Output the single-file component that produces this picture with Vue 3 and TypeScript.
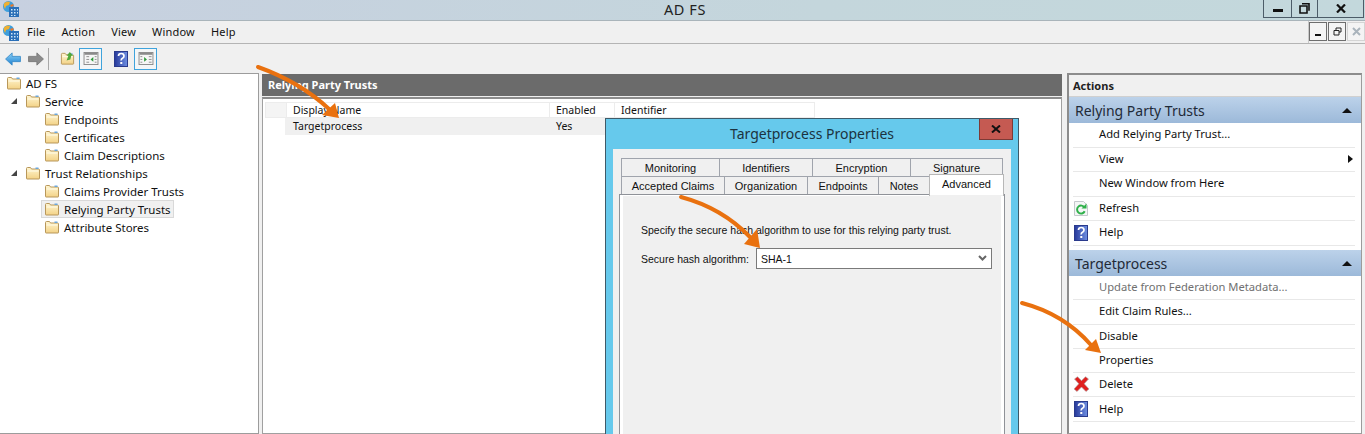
<script setup lang="ts">
const menus = ['File', 'Action', 'View', 'Window', 'Help']
const tree = [
  { label: 'AD FS', level: 0, open: false, sel: false },
  { label: 'Service', level: 1, open: true, sel: false },
  { label: 'Endpoints', level: 2, open: false, sel: false },
  { label: 'Certificates', level: 2, open: false, sel: false },
  { label: 'Claim Descriptions', level: 2, open: false, sel: false },
  { label: 'Trust Relationships', level: 1, open: true, sel: false },
  { label: 'Claims Provider Trusts', level: 2, open: false, sel: false },
  { label: 'Relying Party Trusts', level: 2, open: false, sel: true },
  { label: 'Attribute Stores', level: 2, open: false, sel: false },
]
const tabsTop = [
  { label: 'Monitoring', w: 98 },
  { label: 'Identifiers', w: 93 },
  { label: 'Encryption', w: 98 },
  { label: 'Signature', w: 93 },
]
const tabsBottom = [
  { label: 'Accepted Claims', w: 103 },
  { label: 'Organization', w: 83 },
  { label: 'Endpoints', w: 71 },
  { label: 'Notes', w: 51 },
]
const group1 = [
  { label: 'Add Relying Party Trust...', icon: '' },
  { label: 'View', icon: '', more: true },
  { label: 'New Window from Here', icon: '' },
  { label: 'Refresh', icon: 'refresh' },
  { label: 'Help', icon: 'help' },
]
const group2 = [
  { label: 'Update from Federation Metadata...', icon: '', off: true },
  { label: 'Edit Claim Rules...', icon: '' },
  { label: 'Disable', icon: '' },
  { label: 'Properties', icon: '' },
  { label: 'Delete', icon: 'delete' },
  { label: 'Help', icon: 'help' },
]
</script>

<template>
  <div class="app">
    <svg class="defs" width="0" height="0">
      <defs>
        <linearGradient id="fold" x1="0" y1="0" x2="0" y2="1">
          <stop offset="0" stop-color="#fff6d2" />
          <stop offset="1" stop-color="#f3d286" />
        </linearGradient>
        <linearGradient id="bk" x1="0" y1="0" x2="1" y2="0">
          <stop offset="0" stop-color="#26389a" />
          <stop offset="1" stop-color="#6f90e2" />
        </linearGradient>
        <linearGradient id="ar" x1="0" y1="0" x2="0" y2="1">
          <stop offset="0" stop-color="#8fd3f7" />
          <stop offset="1" stop-color="#1c7fd0" />
        </linearGradient>
        <symbol id="folder" viewBox="0 0 16 16">
          <path d="M1.500 13.500V3.500q0-1 1-1h3l1 1.500h7q1 0 1 1v8.500q0 .5-.5 .5H2q-.5 0-.5-.5z" fill="url(#fold)" stroke="#b8975a" />
          <path d="M10.500 2.500h3v1.500h-3z" fill="#6aa6dc" />
          <path d="M2.500 6h11" stroke="#fffbe8" />
        </symbol>
        <symbol id="mmc" viewBox="0 0 18 18">
          <circle cx="6.500" cy="6.500" r="5.500" fill="#3f9fdc" />
          <path d="M2 3.500q3-3 6-1.500l-1 3-3 1-1 3q-2-3-1-5.500z" fill="#f0b030" />
          <path d="M8 5l3-1 1 2-3 1z" fill="#e87a30" />
          <rect x="7" y="7" width="10" height="10" fill="#2a6fb8" />
          <path d="M9 9h1.500v1.500H9zM12 9h1.500v1.500H12zM15 9h1v1.500h-1zM9 12h1.500v1.500H9zM12 12h1.500v1.500H12zM15 12h1v1.500h-1zM9 15h1.500v1H9zM12 15h1.500v1H12z" fill="#cfe6f7" />
        </symbol>
        <symbol id="help" viewBox="0 0 14 16">
          <rect x="0.500" y="0.500" width="13" height="15" fill="url(#bk)" stroke="#2a3a8c" />
          <path d="M4.500 5q0-2.500 2.700-2.500T10 5q0 1.500-1.500 2.300T7.300 9.500" fill="none" stroke="#fff" stroke-width="1.700" />
          <rect x="6.300" y="11" width="2" height="2" fill="#fff" />
        </symbol>
      </defs>
    </svg>

    <header class="title">
      <svg class="ico18 t-ico"><use href="#mmc" /></svg>
      <span class="title-text">AD FS</span>
      <div class="win-btns">
        <div class="wb wb-min"><i></i></div>
        <div class="wb wb-max"><svg width="11" height="11" viewBox="0 0 11 11"><path d="M3 .750h7v7M1 3h7v7H1z" fill="none" stroke="#111" stroke-width="1.600" /></svg></div>
        <div class="wb wb-close">
          <svg width="10" height="9" viewBox="0 0 10 9"><path d="M1 .5l8 8M9 .5l-8 8" stroke="#111" stroke-width="2.200" /></svg>
        </div>
      </div>
    </header>

    <nav class="menubar">
      <svg class="ico18 m-ico"><use href="#mmc" /></svg>
      <span v-for="m in menus" :key="m" class="menu">{{ m }}</span>
      <div class="mdi-btns">
        <div class="mb"><i class="mb-min"></i></div>
        <div class="mb">
          <svg width="9" height="9" viewBox="0 0 9 9"><path d="M3 3V1h5v4H6M1 3.500h5v4.500H1z" fill="none" stroke="#222" /></svg>
        </div>
        <div class="mb mb-off">
          <svg width="9" height="9" viewBox="0 0 9 9"><path d="M1 1l7 7M8 1l-7 7" stroke="#aab4bc" stroke-width="2" /></svg>
        </div>
      </div>
    </nav>

    <div class="toolbar">
      <svg class="tb-back" width="16" height="14" viewBox="0 0 18 16"><path d="M.5 8L8 1v4h9.500v6H8v4z" fill="url(#ar)" stroke="#3a8bc8" /></svg>
      <svg class="tb-fwd" width="16" height="14" viewBox="0 0 18 16"><path d="M17.500 8L10 1v4H.5v6H10v4z" fill="#8a8a8a" stroke="#777" /></svg>
      <span class="tb-sep"></span>
      <svg class="tb-up" width="15" height="15" viewBox="0 0 16 16"><use href="#folder" /><path d="M7 10l2-5-2 0 3.500-4L14 5h-2l-1 4z" fill="#4fa83a" /></svg>
      <span class="tb-btn">
        <svg width="16" height="13" viewBox="0 0 16 14"><rect x=".5" y=".5" width="15" height="13" fill="#f6f6f6" stroke="#888" /><path d="M1 1h14v2H1z" fill="#8a8a8a" /><path d="M3 5h3M3 8h3M3 11h3M12 5h2M12 8h2M12 11h2" stroke="#8a8a8a" /><path d="M10.500 5.500v5L7.500 8z" fill="#2f9a3c" /></svg>
      </span>
      <svg class="tb-help" width="14" height="16"><use href="#help" /></svg>
      <span class="tb-btn">
        <svg width="16" height="13" viewBox="0 0 16 14"><rect x=".5" y=".5" width="15" height="13" fill="#f6f6f6" stroke="#888" /><path d="M1 1h14v2H1z" fill="#8a8a8a" /><path d="M2 5h2M2 8h2M2 11h2M11 5h3M11 8h3M11 11h3" stroke="#8a8a8a" /><path d="M6 5.500v5L9 8z" fill="#2f9a3c" /></svg>
      </span>
    </div>

    <main class="main">
      <aside class="tree">
        <div v-for="t in tree" :key="t.label" class="tree-row" :class="'lv' + t.level">
          <span class="twisty"><i v-if="t.open"></i></span>
          <span class="tree-item" :class="{ sel: t.sel }">
            <svg width="16" height="16"><use href="#folder" /></svg>
            <span>{{ t.label }}</span>
          </span>
        </div>
      </aside>

      <section class="center">
        <div class="c-head">Relying Party Trusts</div>
        <div class="c-body">
          <div class="lh">
            <span class="lh-c c0"></span>
            <span class="lh-c c1">Display Name</span>
            <span class="lh-c c2">Enabled</span>
            <span class="lh-c c3">Identifier</span>
          </div>
          <div class="lr">
            <span class="c1 lr-name">Targetprocess</span>
            <span class="c2 lr-yes">Yes</span>
          </div>
        </div>
      </section>

      <aside class="actions">
        <div class="a-title">Actions</div>
        <div class="a-group">
          <span>Relying Party Trusts</span><i class="caret"></i>
        </div>
        <div v-for="a in group1" :key="a.label" class="a-item">
          <svg v-if="a.icon === 'help'" class="a-ico" width="14" height="16"><use href="#help" /></svg>
          <svg v-else-if="a.icon === 'refresh'" class="a-ico" width="14" height="15" viewBox="0 0 14 15"><path d="M.5 .5h9l4 4v10H.5z" fill="#f4f6f6" stroke="#c4c8cc" /><path d="M10.500 6.500a4 4 0 1 0 .2 3.800" fill="none" stroke="#2fb04a" stroke-width="2" /><path d="M7.500 7.500h5v-5z" fill="#2fb04a" /></svg>
          <span>{{ a.label }}</span>
          <i v-if="a.more" class="more"></i>
        </div>
        <div class="a-group g2">
          <span>Targetprocess</span><i class="caret"></i>
        </div>
        <div v-for="a in group2" :key="a.label" class="a-item" :class="{ off: a.off }">
          <svg v-if="a.icon === 'help'" class="a-ico" width="14" height="16"><use href="#help" /></svg>
          <svg v-else-if="a.icon === 'delete'" class="a-ico del" width="17" height="16" viewBox="0 0 17 16"><path d="M1.500 3l3-2.300 4 4 4-4L15.500 3l-4.300 4.800 4.800 5.200-3 2.500-4.500-4.500L4 15.500 1 13l4.800-5.200z" fill="#e0201f" stroke="#b5a8a8" stroke-width=".7" /></svg>
          <span>{{ a.label }}</span>
        </div>
      </aside>
    </main>

    <div class="dialog">
      <div class="d-title">Targetprocess Properties</div>
      <div class="d-close">
        <svg width="10" height="8" viewBox="0 0 10 8"><path d="M1 .5l8 7M9 .5l-8 7" stroke="#111" stroke-width="2" /></svg>
      </div>
      <div class="d-body">
        <div class="tabs">
          <div class="tabrow">
            <span v-for="t in tabsTop" :key="t.label" class="tab" :style="{ width: t.w + 'px' }">{{ t.label }}</span>
          </div>
          <div class="tabrow">
            <span v-for="t in tabsBottom" :key="t.label" class="tab" :style="{ width: t.w + 'px' }">{{ t.label }}</span>
            <span class="tab active">Advanced</span>
          </div>
        </div>
        <div class="pane">
          <div class="pane-in">
            <p class="p1">Specify the secure hash algorithm to use for this relying party trust.</p>
            <div class="field">
              <label>Secure hash algorithm:</label>
              <div class="select">
                <span>SHA-1</span>
                <svg width="9" height="7" viewBox="0 0 9 7"><path d="M1 1l3.500 3.500L8 1" fill="none" stroke="#666" stroke-width="2" /></svg>
              </div>
            </div>
          </div>
        </div>
      </div>
    </div>

    <svg class="arrows" width="1365" height="434" viewBox="0 0 1365 434">
      <g fill="none" stroke="#e9710f" stroke-width="4" stroke-linecap="round">
        <path d="M258 67Q300 82 329 109" />
        <path d="M681 197Q722 208 750 237" />
        <path d="M1022 303Q1064 314 1091 345" />
      </g>
      <g fill="#e9710f">
        <path d="M339 118L322 115L335 103z" />
        <path d="M760 248L744 244L757 229z" />
        <path d="M1101 353L1085 350L1096 339z" />
      </g>
    </svg>
  </div>
</template>

<style>
html, body { margin: 0; padding: 0; background: #f0f0f0; overflow: hidden; }
</style>

<style scoped>
.app {
  position: relative;
  width: 1365px;
  height: 434px;
  overflow: hidden;
  display: flex;
  flex-direction: column;
  background: #f0f0f0;
  font-family: "Noto Sans", "Liberation Sans", sans-serif;
  font-size: 11.500px;
  color: #111;
}
.defs { position: absolute; }
.ico18 { width: 18px; height: 18px; flex: none; }
.title {
  height: 20px;
  flex: none;
  display: flex;
  align-items: flex-start;
  position: relative;
  background: linear-gradient(90deg, #c7d0e0, #c4d6dc 60%, #c3d8dc);
  border-bottom: 1px solid #a9b4ba;
}
.t-ico { margin: 0 0 0 2px; }
.title-text {
  position: absolute;
  left: 5px;
  right: 0;
  top: 0;
  text-align: center;
  font-size: 14.500px;
  letter-spacing: .6px;
  line-height: 19px;
  color: #222;
}
.win-btns {
  position: absolute;
  right: 1px;
  top: 0;
  display: flex;
  height: 17px;
  border: 1px solid #4c5c68;
  border-top: 0;
}
.wb { display: flex; align-items: center; justify-content: center; height: 17px; }
.wb + .wb { border-left: 1px solid #4c5c68; }
.wb-min { width: 27px; }
.wb-min i { display: block; width: 10px; height: 3px; background: #111; margin-top: 3px; }
.wb-max { width: 25px; }
.wb-close { width: 45px; }

.menubar {
  height: 23px;
  flex: none;
  display: flex;
  align-items: center;
  position: relative;
  border-bottom: 1px solid #b4b4b4;
  padding: 0 0 1px 2px;
  box-sizing: border-box;
  font-size: 11px;
}
.m-ico { margin: 3px 7px 0 0; }
.menu { margin-right: 16px; letter-spacing: .2px; }
.mdi-btns {
  position: absolute;
  right: 0;
  top: 0;
  height: 22px;
  box-sizing: border-box;
  display: flex;
  border-left: 1px solid #c8c8c8;
  padding: 1px 0 0 0;
  gap: 1px;
  width: 57px;
}
.mb {
  width: 18px;
  height: 19px;
  box-sizing: border-box;
  border: 1px solid #6e6e6e;
  display: flex;
  align-items: center;
  justify-content: center;
  background: #f4f4f4;
}
.mb-off { border-color: #d4d4d4; }
.mb-min { display: block; width: 6px; height: 2px; background: #111; margin-top: 7px; }

.toolbar {
  height: 29px;
  flex: none;
  display: flex;
  align-items: center;
  padding-left: 5px;
  box-sizing: border-box;
}
.tb-back { margin-right: 7px; }
.tb-fwd { margin-right: 4px; }
.tb-sep { width: 1px; height: 22px; background: #a8a8a8; margin-right: 11px; }
.tb-up { margin-right: 4px; }
.tb-btn {
  width: 23px;
  height: 22px;
  box-sizing: border-box;
  border: 1px solid #3fa3dc;
  background: #f4f6f7;
  display: flex;
  align-items: center;
  justify-content: center;
}
.tb-help { margin: 0 6px 0 12px; }

.main { flex: 1; display: flex; min-height: 0; }
.tree {
  width: 259px;
  flex: none;
  box-sizing: border-box;
  background: #fff;
  border: 1px solid #9c9c9c;
  border-left: 0;
}
.tree-row { height: 18px; display: flex; align-items: center; white-space: nowrap; }
.lv0 { padding-left: 6px; }
.lv0 .twisty { display: none; }
.lv1 { padding-left: 9px; }
.lv2 { padding-left: 41px; }
.lv2 .twisty { display: none; }
.twisty { width: 16px; height: 16px; flex: none; position: relative; }
.twisty i {
  position: absolute;
  left: 2px;
  top: 5px;
  width: 0;
  height: 0;
  border-left: 6px solid transparent;
  border-bottom: 6px solid #444;
}
.tree-item { display: flex; align-items: center; height: 18px; gap: 4px; box-sizing: border-box; }
.lv2 .tree-item { padding: 0 3px; }
.tree-item svg { flex: none; }
.lv2 .tree-item.sel { background: #f0f0f0; border: 1px solid #d9d9d9; padding: 0 2px; }

.center {
  width: 800px;
  flex: none;
  margin-left: 3px;
  display: flex;
  flex-direction: column;
  padding-top: 1px;
}
.c-head {
  height: 22px;
  background: #6b6b6b;
  color: #fff;
  font-weight: 700;
  font-size: 11px;
  line-height: 22px;
  padding-left: 6px;
  flex: none;
}
.c-body {
  flex: 1;
  background: #fff;
  border: 1px solid #a0a0a0;
  border-top: 2px solid #8c8c8c;
  margin-top: 1px;
  padding: 3px 0 0 2px;
  font-size: 10.500px;
}
.lh { display: flex; height: 16px; }
.lh-c {
  box-sizing: border-box;
  border: 1px solid #ececec;
  border-left-width: 0;
  line-height: 14px;
  padding-left: 6px;
  white-space: nowrap;
}
.c0 { width: 22px; background: #f4f4f4; border-left-width: 1px; }
.lh-c.c1 { width: 263px; }
.lh-c.c2 { width: 65px; }
.lh-c.c3 { width: 200px; }
.lr { display: flex; height: 17px; margin-left: 20px; background: #f0f0f0; line-height: 17px; width: 340px; }
.lr-name { width: 265px; padding-left: 8px; box-sizing: border-box; }
.lr-yes { padding-left: 6px; }

.actions {
  width: 295px;
  flex: none;
  margin-left: 5px;
  box-sizing: border-box;
  background: #fff;
  border: 1px solid #9c9c9c;
  border-top: 2px solid #8c8c8c;
  border-left: 2px solid #8c8c8c;
  font-size: 11.200px;
}
.a-title {
  height: 21px;
  line-height: 21px;
  padding-left: 4px;
  font-weight: 700;
  font-size: 11px;
  background: #f0f0f0;
  border-bottom: 1px solid #d0d0d0;
  color: #222;
}
.a-group {
  height: 26px;
  display: flex;
  align-items: center;
  justify-content: space-between;
  padding: 0 9px 0 6px;
  background: linear-gradient(#bcd2ea, #9cb9d9);
  font-size: 14px;
  color: #1f2a38;
}
.g2 { margin-top: 4.500px; }
.caret { width: 0; height: 0; border: 5px solid transparent; border-top: 0; border-bottom: 5px solid #111; }
.a-item {
  height: 24.500px;
  margin: 0 6px 0 4px;
  display: flex;
  align-items: center;
  padding: 0 0 2px 26px;
  position: relative;
  box-sizing: border-box;
  border-bottom: 1px solid #e8e8e8;
  color: #111;
}
.g2 ~ .a-item { height: 24.300px; }
.off { color: #707070; }
.a-ico { position: absolute; left: 1px; top: 4px; }
.del { left: 0; top: 3px; }
.more {
  position: absolute;
  right: 2px;
  top: 7px;
  width: 0;
  height: 0;
  border-top: 4px solid transparent;
  border-bottom: 4px solid transparent;
  border-left: 5px solid #111;
}

.dialog {
  position: absolute;
  left: 605px;
  top: 118px;
  width: 414px;
  height: 330px;
  box-sizing: border-box;
  background: #66c9ec;
  border: 1px solid #3f5a68;
}
.d-title {
  text-align: center;
  font-size: 14px;
  line-height: 30px;
  color: #1c3340;
}
.d-close {
  position: absolute;
  right: 5px;
  top: 0;
  width: 34px;
  height: 21px;
  background: #c55a52;
  border: 1px solid #7d3a36;
  border-top: 0;
  box-sizing: border-box;
  display: flex;
  align-items: center;
  justify-content: center;
}
.d-body {
  position: absolute;
  left: 7px;
  right: 7px;
  top: 30px;
  bottom: 0;
  background: #f0f0f0;
  padding: 9px 0 0 6px;
  box-sizing: border-box;
  font-family: "Liberation Sans", Arial, sans-serif;
  font-size: 11px;
}
.tabs { height: 36px; position: relative; z-index: 1; }
.tabrow { display: flex; height: 18px; padding-left: 2px; }
.tab {
  box-sizing: border-box;
  border: 1px solid #a0a4ac;
  border-right-width: 0;
  border-bottom-width: 0;
  height: 18px;
  line-height: 19px;
  text-align: center;
  background: #f0f0f0;
  white-space: nowrap;
}
.tabrow:first-child .tab:last-child { border-right-width: 1px; }
.tab.active {
  width: 75px;
  height: 22px;
  margin-top: -2px;
  border: 1px solid #b8b8b8;
  border-bottom: 0;
  line-height: 18px;
  position: relative;
  z-index: 2;
  background: linear-gradient(#fff 20px, #f0f0f0 20px);
}
.pane {
  box-sizing: border-box;
  width: 386px;
  height: 260px;
  border: 1px solid #8f9298;
  border-bottom: 0;
}
.pane-in {
  box-sizing: border-box;
  height: 100%;
  background: #f0f0f0;
  border: solid #fff;
  border-width: 1px 3px 0 3px;
  padding: 26px 0 0 18px;
  font-size: 10.500px;
}
.p1 { margin: 0; line-height: 16px; white-space: nowrap; }
.field { display: flex; align-items: center; margin-top: 10px; }
.field label { white-space: nowrap; width: 115px; flex: none; }
.select {
  width: 236px;
  height: 21px;
  flex: none;
  box-sizing: border-box;
  background: #fff;
  border: 1px solid #7a7a7a;
  display: flex;
  align-items: center;
  justify-content: space-between;
  padding: 0 4px;
}
.arrows { position: absolute; left: 0; top: 0; pointer-events: none; }
</style>
